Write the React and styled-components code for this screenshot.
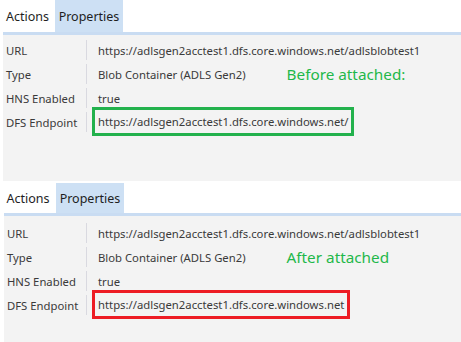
import React from 'react';
import styled, { createGlobalStyle } from 'styled-components';

const GlobalStyle = createGlobalStyle`
  html, body {
    margin: 0;
    padding: 0;
    background: #fff;
    overflow: hidden;
  }
  body {
    font-family: "Noto Sans", "Open Sans", sans-serif;
    color: #333;
  }
`;

const panels = [
  {
    shift: 3,
    tabHeight: 32,
    bodyHeight: 146,
    rowsTop: 3,
    note: 'Before attached:',
    endpoint: 'https://adlsgen2acctest1.dfs.core.windows.net/',
    boxColor: '#22b14c',
    boxWidth: 262,
  },
  {
    shift: 4,
    tabHeight: 30,
    bodyHeight: 140,
    rowsTop: 5,
    note: 'After attached',
    endpoint: 'https://adlsgen2acctest1.dfs.core.windows.net',
    boxColor: '#ed1c24',
    boxWidth: 258,
  },
];

const PropertiesPanel = ({ panel }) => {
  return (
    <Panel>
      <TabBar height={panel.tabHeight}>
        <Tab width={52 + panel.shift}>Actions</Tab>
        <Tab active width={68}>Properties</Tab>
      </TabBar>
      <Rule shift={panel.shift} />
      <Body shift={panel.shift} height={panel.bodyHeight} top={panel.rowsTop}>
        <Row>
          <Label shift={panel.shift}>URL</Label>
          <Value>https://adlsgen2acctest1.dfs.core.windows.net/adlsblobtest1</Value>
        </Row>
        <Row>
          <Label shift={panel.shift}>Type</Label>
          <Value>
            Blob Container (ADLS Gen2)
            <Note>{panel.note}</Note>
          </Value>
        </Row>
        <Row>
          <Label shift={panel.shift}>HNS Enabled</Label>
          <Value>true</Value>
        </Row>
        <Row>
          <Label shift={panel.shift}>DFS Endpoint</Label>
          <Value>
            <Highlight color={panel.boxColor} width={panel.boxWidth}>
              {panel.endpoint}
            </Highlight>
          </Value>
        </Row>
      </Body>
    </Panel>
  );
};

const App = () => {
  return (
    <>
      <GlobalStyle />
      <Page>
        {panels.map((p, i) => (
          <PropertiesPanel key={i} panel={p} />
        ))}
      </Page>
    </>
  );
};

const Page = styled.div`
  width: 461px;
  height: 342px;
  display: flex;
  flex-direction: column;
  gap: 2px;
`;

const Panel = styled.div`
  display: flex;
  flex-direction: column;
`;

const TabBar = styled.div`
  display: flex;
  height: ${(p) => p.height}px;
  background: #fff;
`;

const Tab = styled.div`
  width: ${(p) => p.width}px;
  display: flex;
  align-items: center;
  justify-content: center;
  font-size: 12.5px;
  color: #1e1e1e;
  background: ${(p) => (p.active ? '#cde0f4' : '#fff')};
`;

const Rule = styled.div`
  height: 3px;
  margin-left: ${(p) => p.shift}px;
  background: #c9dcf2;
`;

const Body = styled.div`
  margin-left: ${(p) => p.shift}px;
  height: ${(p) => p.height}px;
  padding-top: ${(p) => p.top}px;
  box-sizing: border-box;
  background: #f3f3f3;
  display: flex;
  flex-direction: column;
`;

const Row = styled.div`
  display: flex;
  height: 24px;
  align-items: center;
  font-size: 11.3px;
`;

const Label = styled.div`
  width: ${(p) => 87 - p.shift}px;
  padding-left: 3px;
  box-sizing: border-box;
  align-self: stretch;
  display: flex;
  align-items: center;
  border-right: 1px solid #d9d9e0;
  margin: 2px 0;
  color: #3a3a3a;
  white-space: nowrap;
`;

const Value = styled.div`
  padding-left: 11px;
  display: flex;
  align-items: center;
  color: #3a3a3a;
  white-space: nowrap;
`;

const Note = styled.span`
  margin-left: 41px;
  font-size: 15.3px;
  color: #1fb84a;
`;

const Highlight = styled.span`
  display: flex;
  align-items: center;
  box-sizing: border-box;
  width: ${(p) => p.width}px;
  height: 29px;
  margin-left: -6px;
  margin-top: -2px;
  padding-left: 3px;
  border: 3px solid ${(p) => p.color};
`;

export default App;
